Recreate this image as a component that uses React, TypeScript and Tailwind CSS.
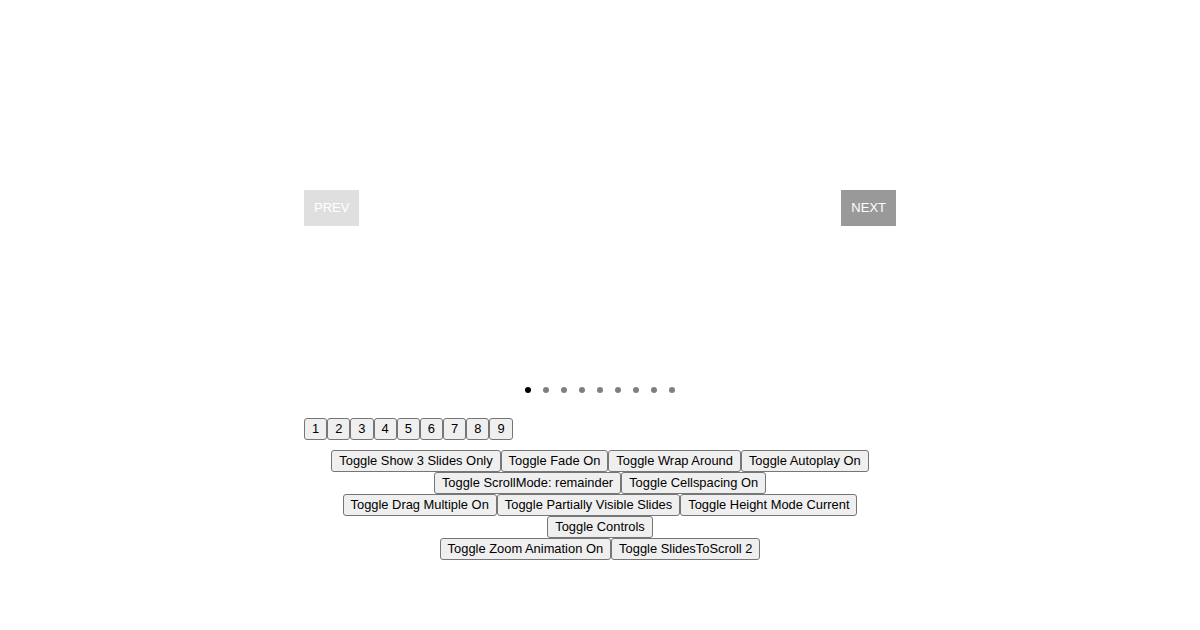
import React from "react";

const btn =
  "bg-[#efefef] border border-[#767676] rounded-[3px] px-[7px] py-[2px] text-[12.9px] leading-[16px] text-black whitespace-nowrap";

const rows = [
  ["Toggle Show 3 Slides Only", "Toggle Fade On", "Toggle Wrap Around", "Toggle Autoplay On"],
  ["Toggle ScrollMode: remainder", "Toggle Cellspacing On"],
  ["Toggle Drag Multiple On", "Toggle Partially Visible Slides", "Toggle Height Mode Current"],
  ["Toggle Controls"],
  ["Toggle Zoom Animation On", "Toggle SlidesToScroll 2"],
];

export default function App() {
  const slides = [1, 2, 3, 4, 5, 6, 7, 8, 9];
  return (
    <div className="w-[1200px] h-[630px] bg-white" style={{ fontFamily: '"Liberation Sans", Arial, sans-serif' }}>
      <div className="w-[592px] mx-auto">
        {/* Carousel frame */}
        <div className="relative h-[416px]">
          <button className="absolute left-0 top-1/2 -translate-y-1/2 bg-[#999999] opacity-30 text-white text-[13px] leading-[16px] p-[10px] uppercase">
            Prev
          </button>
          <button className="absolute right-0 top-1/2 -translate-y-1/2 bg-[#999999] text-white text-[13px] leading-[16px] p-[10px] uppercase">
            Next
          </button>
          <ul className="absolute left-0 right-0 top-[387px] flex justify-center">
            {slides.map((n) => (
              <li key={n} className="w-[18px] flex justify-center">
                <span className={`block w-[6px] h-[6px] rounded-full ${n === 1 ? "bg-black" : "bg-[#808080]"}`} />
              </li>
            ))}
          </ul>
        </div>

        {/* Slide index buttons */}
        <div className="flex mt-[2px]">
          {slides.map((n) => (
            <button key={n} className={btn}>
              {n}
            </button>
          ))}
        </div>

        {/* Toggles */}
        <div className="mt-[10px] flex flex-col items-center">
          {rows.map((row, i) => (
            <div key={i} className="flex justify-center">
              {row.map((label) => (
                <button key={label} className={btn}>
                  {label}
                </button>
              ))}
            </div>
          ))}
        </div>
      </div>
    </div>
  );
}
